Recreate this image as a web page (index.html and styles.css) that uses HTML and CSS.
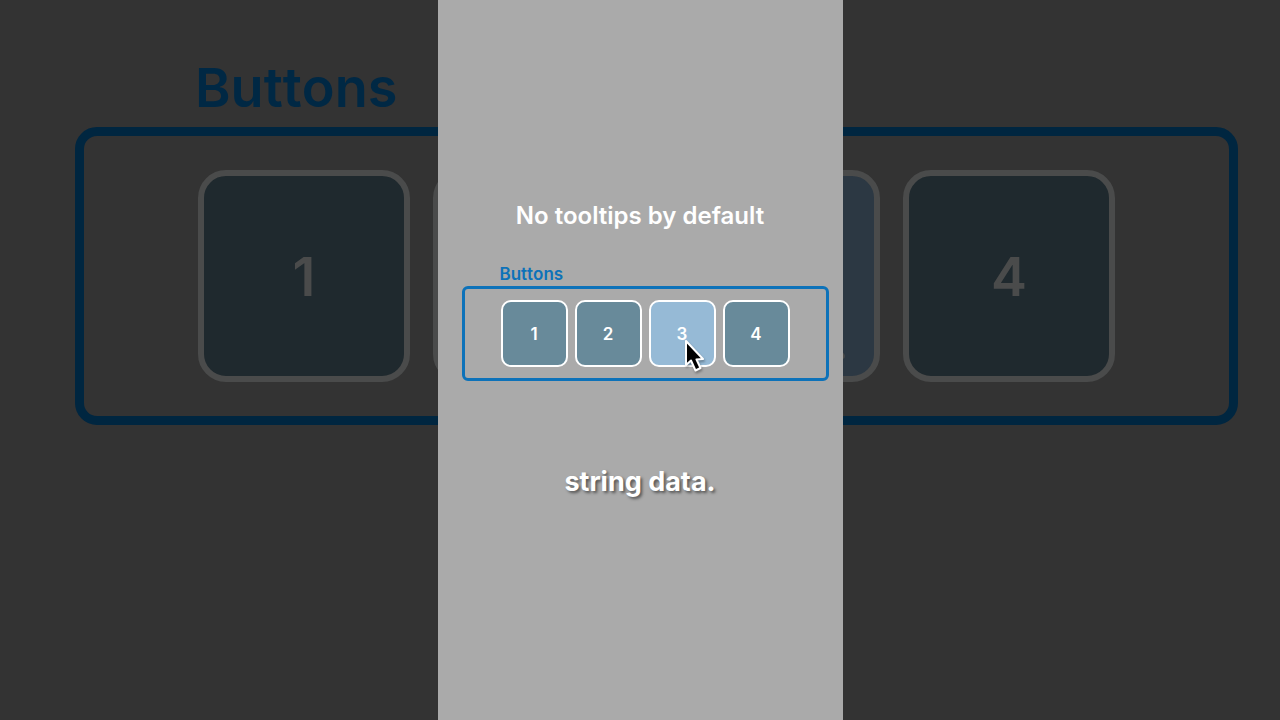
FILE: index.html
```
<!DOCTYPE html>
<html lang="en">
<head>
  <meta charset="UTF-8">
  <meta name="viewport" content="width=device-width, initial-scale=1.0">
  <title>Buttons</title>
  <link rel="stylesheet" href="styles.css">
</head>
<body>
  <div class="stage">
    <!-- enlarged, dimmed copy behind the column -->
    <div class="backdrop" aria-hidden="true">
      <div class="label">Buttons</div>
      <div class="group">
        <button type="button" class="key" tabindex="-1">1</button>
        <button type="button" class="key" tabindex="-1">2</button>
        <button type="button" class="key active" tabindex="-1">3
          <svg class="cursor" viewBox="0 0 20 33"><path d="M1 1V25L6 20.500L10.500 30.500L15.500 28L11.500 19.500L18 19Z"/></svg>
        </button>
        <button type="button" class="key" tabindex="-1">4</button>
      </div>
    </div>

    <main class="column">
      <h1>No tooltips by default</h1>
      <h2 class="label" id="buttons-label">Buttons</h2>
      <div class="group" role="group" aria-labelledby="buttons-label">
        <button type="button" class="key">1</button>
        <button type="button" class="key">2</button>
        <button type="button" class="key active">3
          <svg class="cursor" viewBox="0 0 20 33" aria-hidden="true"><path d="M1 1V25L6 20.500L10.500 30.500L15.500 28L11.500 19.500L18 19Z"/></svg>
        </button>
        <button type="button" class="key">4</button>
      </div>
      <p class="caption">string data.</p>
    </main>
  </div>
</body>
</html>
```
FILE: styles.css
```
* { box-sizing: border-box; }
body { margin: 0; background: #333; font-family: Inter, sans-serif; }
h1, h2, p { margin: 0; }
.stage { display: grid; min-height: 100vh; overflow: hidden; }
.backdrop, .column { grid-area: 1 / 1; }
.group { display: flex; justify-content: space-between; border-style: solid; }
.key { position: relative; padding: 0; border-style: solid; font-family: inherit; font-weight: 600; }
.label { font-weight: 600; font-kerning: none; }
.cursor { position: absolute; overflow: visible; }
.cursor path { stroke-width: 2; stroke-linejoin: round; }

.backdrop { padding: 56px 42px 0 75px; color: #002844; }
.backdrop .label { padding-left: 120px; font-size: 54px; line-height: 64px; }
.backdrop .group { margin-top: 7px; padding: 34px 114px; border-width: 9px; border-color: #002640; border-radius: 22px; }
.backdrop .key { width: 212px; height: 212px; border-width: 6px; border-color: #4a4b4b; border-radius: 28px; background: #1f292e; color: #4a4b4b; font-size: 54px; }
.backdrop .active { background: #2c3843; }
.backdrop .cursor { left: 111px; top: 120px; width: 63px; height: 104px; }
.backdrop .cursor path { fill: #000; stroke: #4a4b4b; }

.column { justify-self: center; z-index: 1; display: flex; flex-direction: column; aspect-ratio: 9 / 16; height: 100vh; padding: 200px 14px 0 24px; background: #aaa; color: #fff; }
.column h1 { padding-right: 10px; font-size: 24px; line-height: 32px; font-weight: 600; text-align: center; }
.column .label { margin-top: 30px; padding-left: 38px; color: #0d72b9; font-size: 17px; line-height: 24px; }
.column .group { padding: 11px 36px; border-width: 3px; border-color: #0d72b9; border-radius: 6px; }
.column .key { width: 67px; height: 67px; border-width: 2px; border-color: #fff; border-radius: 10px; background: #688a9a; color: #fff; font-size: 17px; }
.column .active { background: #96bad6; }
.column .cursor { left: 34px; top: 38px; width: 20px; height: 33px; filter: drop-shadow(1px 2px 1px rgba(0,0,0,0.3)); }
.column .cursor path { fill: #000; stroke: #fff; }
.caption { margin-top: 83px; padding-right: 10px; font-size: 27px; line-height: 36px; font-weight: 700; text-align: center; text-shadow: 2px 2px 3px rgba(0,0,0,0.5); }
```
